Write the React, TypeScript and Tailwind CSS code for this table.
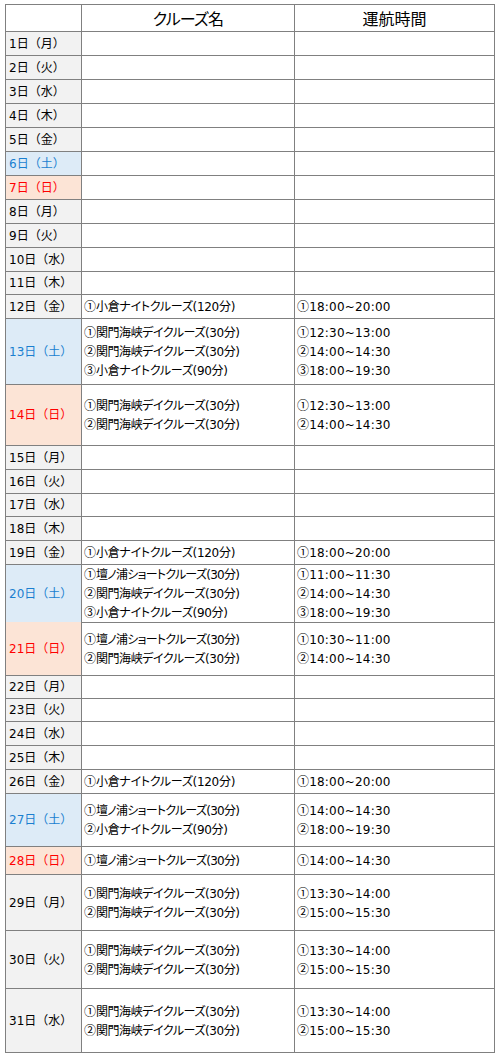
import React from "react";

type Kind = "wd" | "sat" | "sun";
type Row = { d: string; k: Kind; h: string; c?: string[]; t?: string[] };

const rows: Row[] = [
  { d: "1日（月）", k: "wd", h: "h-[24px]" },
  { d: "2日（火）", k: "wd", h: "h-[24px]" },
  { d: "3日（水）", k: "wd", h: "h-[24px]" },
  { d: "4日（木）", k: "wd", h: "h-[24px]" },
  { d: "5日（金）", k: "wd", h: "h-[24px]" },
  { d: "6日（土）", k: "sat", h: "h-[24px]" },
  { d: "7日（日）", k: "sun", h: "h-[24px]" },
  { d: "8日（月）", k: "wd", h: "h-[24px]" },
  { d: "9日（火）", k: "wd", h: "h-[24px]" },
  { d: "10日（水）", k: "wd", h: "h-[24px]" },
  { d: "11日（木）", k: "wd", h: "h-[23px]" },
  {
    d: "12日（金）",
    k: "wd",
    h: "h-[24px]",
    c: ["①小倉ナイトクルーズ(120分)"],
    t: ["①18:00~20:00"],
  },
  {
    d: "13日（土）",
    k: "sat",
    h: "h-[66px]",
    c: ["①関門海峡デイクルーズ(30分)", "②関門海峡デイクルーズ(30分)", "③小倉ナイトクルーズ(90分)"],
    t: ["①12:30~13:00", "②14:00~14:30", "③18:00~19:30"],
  },
  {
    d: "14日（日）",
    k: "sun",
    h: "h-[61px]",
    c: ["①関門海峡デイクルーズ(30分)", "②関門海峡デイクルーズ(30分)"],
    t: ["①12:30~13:00", "②14:00~14:30"],
  },
  { d: "15日（月）", k: "wd", h: "h-[24px]" },
  { d: "16日（火）", k: "wd", h: "h-[24px]" },
  { d: "17日（水）", k: "wd", h: "h-[23px]" },
  { d: "18日（木）", k: "wd", h: "h-[24px]" },
  {
    d: "19日（金）",
    k: "wd",
    h: "h-[24px]",
    c: ["①小倉ナイトクルーズ(120分)"],
    t: ["①18:00~20:00"],
  },
  {
    d: "20日（土）",
    k: "sat",
    h: "h-[57px]",
    c: ["①壇ノ浦ショートクルーズ(30分)", "②関門海峡デイクルーズ(30分)", "③小倉ナイトクルーズ(90分)"],
    t: ["①11:00~11:30", "②14:00~14:30", "③18:00~19:30"],
  },
  {
    d: "21日（日）",
    k: "sun",
    h: "h-[54px]",
    c: ["①壇ノ浦ショートクルーズ(30分)", "②関門海峡デイクルーズ(30分)"],
    t: ["①10:30~11:00", "②14:00~14:30"],
  },
  { d: "22日（月）", k: "wd", h: "h-[23px]" },
  { d: "23日（火）", k: "wd", h: "h-[23px]" },
  { d: "24日（水）", k: "wd", h: "h-[24px]" },
  { d: "25日（木）", k: "wd", h: "h-[24px]" },
  {
    d: "26日（金）",
    k: "wd",
    h: "h-[24px]",
    c: ["①小倉ナイトクルーズ(120分)"],
    t: ["①18:00~20:00"],
  },
  {
    d: "27日（土）",
    k: "sat",
    h: "h-[53px]",
    c: ["①壇ノ浦ショートクルーズ(30分)", "②小倉ナイトクルーズ(90分)"],
    t: ["①14:00~14:30", "②18:00~19:30"],
  },
  {
    d: "28日（日）",
    k: "sun",
    h: "h-[28px]",
    c: ["①壇ノ浦ショートクルーズ(30分)"],
    t: ["①14:00~14:30"],
  },
  {
    d: "29日（月）",
    k: "wd",
    h: "h-[56px]",
    c: ["①関門海峡デイクルーズ(30分)", "②関門海峡デイクルーズ(30分)"],
    t: ["①13:30~14:00", "②15:00~15:30"],
  },
  {
    d: "30日（火）",
    k: "wd",
    h: "h-[58px]",
    c: ["①関門海峡デイクルーズ(30分)", "②関門海峡デイクルーズ(30分)"],
    t: ["①13:30~14:00", "②15:00~15:30"],
  },
  {
    d: "31日（水）",
    k: "wd",
    h: "h-[64px]",
    c: ["①関門海峡デイクルーズ(30分)", "②関門海峡デイクルーズ(30分)"],
    t: ["①13:30~14:00", "②15:00~15:30"],
  },
];

const dateCls: Record<Kind, string> = {
  wd: "bg-[#f2f2f2] text-black",
  sat: "bg-[#ddebf7] text-[#1a7fd0]",
  sun: "bg-[#fce4d6] text-[#ff0000]",
};

const cell = "flex items-center border-r border-b border-[#808080]";
const cjk = { fontFamily: '"Noto Sans CJK JP", sans-serif' };

function Line({ text, palt }: { text: string; palt?: boolean }) {
  const mark = text.slice(0, 1);
  const rest = text.slice(1);
  let restCls = "";
  if (palt) {
    restCls = text.includes("壇ノ浦")
      ? '[font-feature-settings:"palt"] tracking-[-0.75px]'
      : text.includes("関門")
        ? '[font-feature-settings:"palt"] tracking-[-0.45px]'
        : '[font-feature-settings:"palt"] tracking-[-0.3px]';
  }
  return (
    <span className="whitespace-nowrap">
      <span style={cjk}>{mark}</span>
      <span className={restCls}>{rest}</span>
    </span>
  );
}

export default function App() {
  return (
    <div
      className="min-h-[1058px] w-[498px] bg-white pt-[4px] pl-[5px] text-[12px] leading-[18px] text-black"
      style={{ fontFamily: '"DejaVu Sans", "Noto Sans CJK JP", sans-serif' }}
    >
      <div className="w-[490px] border-l border-t border-[#808080]">
        <div className="grid h-[27px] grid-cols-[76px_213px_200px]">
          <div className={cell} />
          <div className={`${cell} justify-center text-[16px]`}>
            <span style={cjk} className='[font-feature-settings:"palt"] tracking-[-0.8px]'>
              クルーズ名
            </span>
          </div>
          <div className={`${cell} justify-center text-[16px]`}>
            <span style={cjk}>運航時間</span>
          </div>
        </div>
        {rows.map((r) => (
          <div key={r.d} className={`grid grid-cols-[76px_213px_200px] ${r.h}`}>
            <div className={`${cell} pl-[3px] ${dateCls[r.k]}`}>{r.d}</div>
            <div className={`${cell} pl-[2px]`}>
              <div className="flex flex-col">
                {r.c?.map((x, i) => (
                  <Line key={i} text={x} palt />
                ))}
              </div>
            </div>
            <div className={`${cell} pl-[2px]`}>
              <div className="flex flex-col tracking-[0.2px]">
                {r.t?.map((x, i) => (
                  <Line key={i} text={x} />
                ))}
              </div>
            </div>
          </div>
        ))}
      </div>
    </div>
  );
}
